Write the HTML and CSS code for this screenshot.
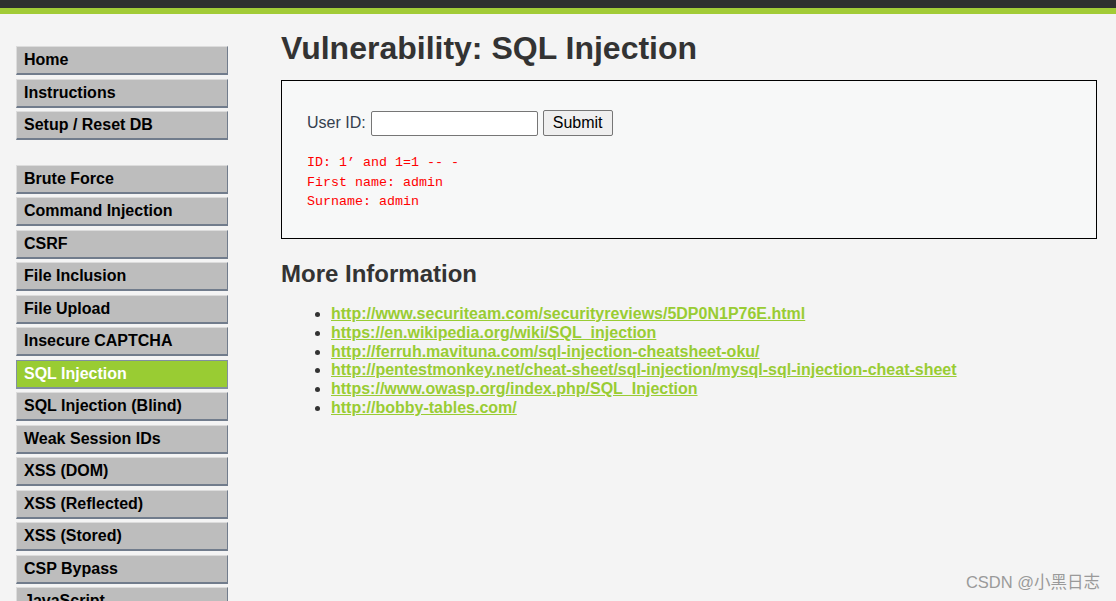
FILE: index.html
```html
<!DOCTYPE html>
<html>
<head>
<meta charset="utf-8">
<title>DVWA</title>
<link rel="stylesheet" href="styles.css">
</head>
<body>
<div class="topbar"></div>
<div class="greenbar"></div>
<div class="layout">
  <nav class="menu">
    <ul class="group">
      <li><a href="#">Home</a></li>
      <li><a href="#">Instructions</a></li>
      <li><a href="#">Setup / Reset DB</a></li>
    </ul>
    <ul class="group">
      <li><a href="#">Brute Force</a></li>
      <li><a href="#">Command Injection</a></li>
      <li><a href="#">CSRF</a></li>
      <li><a href="#">File Inclusion</a></li>
      <li><a href="#">File Upload</a></li>
      <li><a href="#">Insecure CAPTCHA</a></li>
      <li class="selected"><a href="#">SQL Injection</a></li>
      <li><a href="#">SQL Injection (Blind)</a></li>
      <li><a href="#">Weak Session IDs</a></li>
      <li><a href="#">XSS (DOM)</a></li>
      <li><a href="#">XSS (Reflected)</a></li>
      <li><a href="#">XSS (Stored)</a></li>
      <li><a href="#">CSP Bypass</a></li>
      <li><a href="#">JavaScript</a></li>
    </ul>
  </nav>
  <main class="main">
    <h1 class="title">Vulnerability: SQL Injection</h1>
    <div class="vulnerable">
      <form class="form">
        <label class="label">User ID:</label>
        <input class="field" type="text">
        <button class="submit" type="button">Submit</button>
      </form>
      <pre class="output">ID: 1’ and 1=1 -- -
First name: admin
Surname: admin</pre>
    </div>
    <h2 class="subtitle">More Information</h2>
    <ul class="links">
      <li><a href="#">http://www.securiteam.com/securityreviews/5DP0N1P76E.html</a></li>
      <li><a href="#">https://en.wikipedia.org/wiki/SQL_injection</a></li>
      <li><a href="#">http://ferruh.mavituna.com/sql-injection-cheatsheet-oku/</a></li>
      <li><a href="#">http://pentestmonkey.net/cheat-sheet/sql-injection/mysql-sql-injection-cheat-sheet</a></li>
      <li><a href="#">https://www.owasp.org/index.php/SQL_Injection</a></li>
      <li><a href="#">http://bobby-tables.com/</a></li>
    </ul>
  </main>
</div>
<div class="watermark">CSDN @小黑日志</div>
</body>
</html>
```
FILE: styles.css
```css
html {
  overflow: hidden;
}
body {
  margin: 0;
  background: #f4f4f4;
  font-family: "Liberation Sans", Arial, sans-serif;
  color: #333;
  height: 601px;
  position: relative;
}
.topbar {
  height: 8px;
  background: #2f2f2f;
}
.greenbar {
  height: 6px;
  background: #a2cb37;
}
.layout {
  display: flex;
  align-items: flex-start;
}
.menu {
  width: 212px;
  margin-left: 16px;
  padding-top: 32px;
}
.group {
  list-style: none;
  margin: 0 0 24.5px 0;
  padding: 0;
}
.group li {
  margin-bottom: 3.5px;
}
.group li a {
  display: flex;
  align-items: center;
  box-sizing: border-box;
  height: 29px;
  padding-left: 7px;
  background: #bdbdbd;
  border: 1px solid #717c8c;
  border-top-color: #dcdcdc;
  border-left-color: #dcdcdc;
  border-bottom-width: 2px;
  color: #000;
  font-weight: bold;
  font-size: 16px;
  text-decoration: none;
}
.group li.selected a {
  background: #99cc33;
  color: #fff;
  border-color: #8290a0;
}
.main {
  margin-left: 53px;
  width: 816px;
}
.title {
  margin: 16px 0 14px 0;
  font-size: 32px;
  line-height: 36px;
  font-weight: bold;
  color: #333;
}
.vulnerable {
  box-sizing: border-box;
  height: 159px;
  border: 1px solid #000;
  background: #f7f8f8;
  padding: 29px 25px 0 25px;
}
.form {
  display: flex;
  align-items: center;
  gap: 4px;
  margin: 0;
}
.label {
  font-size: 16px;
  color: #34404e;
  margin-right: 1px;
}
.field {
  box-sizing: border-box;
  width: 167px;
  height: 25px;
  border: 1px solid #767676;
  border-radius: 2px;
  background: #fff;
  margin: 0;
}
.submit {
  box-sizing: border-box;
  width: 70px;
  height: 26px;
  margin: 0 0 0 1px;
  border: 1px solid #767676;
  border-radius: 2px;
  background: #efefef;
  font-family: "Liberation Sans", Arial, sans-serif;
  font-size: 16px;
  color: #000;
  padding: 0;
}
.output {
  margin: 17px 0 0 0;
  font-family: "Liberation Mono", "Courier New", monospace;
  font-size: 13.33px;
  line-height: 19.5px;
  color: #ff0000;
}
.subtitle {
  margin: 21px 0 17px 0;
  font-size: 24px;
  line-height: 28px;
  font-weight: bold;
  color: #333;
}
.links {
  margin: 0;
  padding-left: 50px;
  font-size: 16px;
  line-height: 18.8px;
}
.links a {
  color: #99cc33;
  font-weight: bold;
  text-decoration: underline;
}
.watermark {
  position: absolute;
  right: 16px;
  bottom: 8px;
  font-family: "Liberation Sans", "Noto Sans CJK SC", sans-serif;
  font-size: 16.5px;
  color: #9a9a9a;
}
```
